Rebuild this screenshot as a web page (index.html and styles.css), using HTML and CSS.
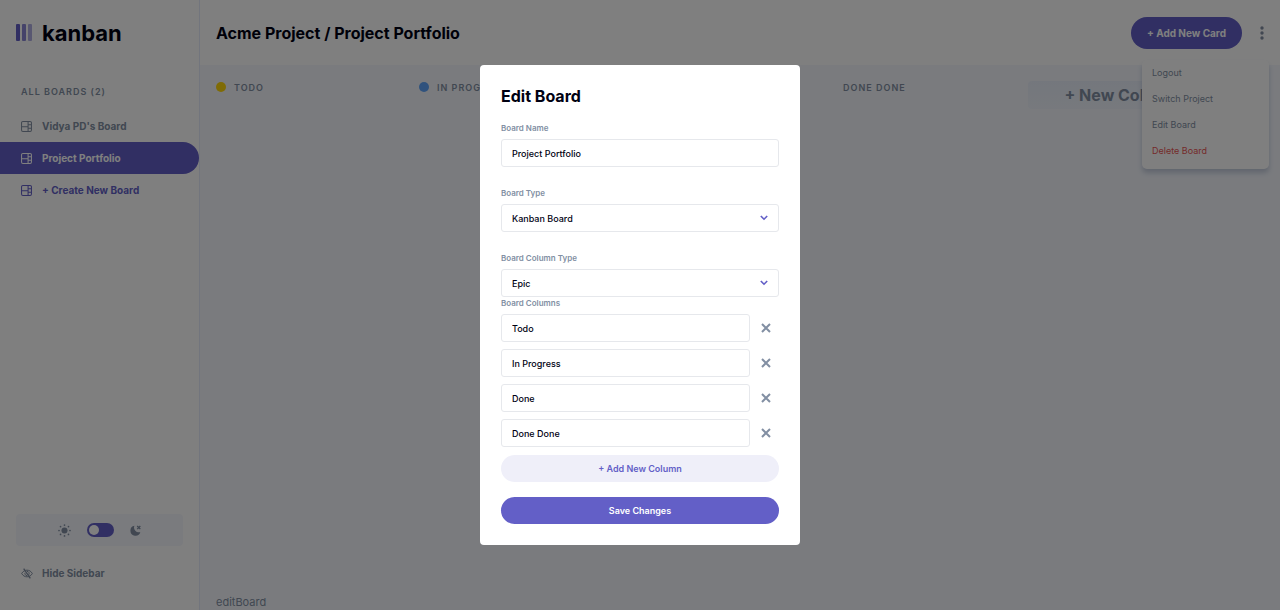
FILE: index.html
```html
<!DOCTYPE html>
<html lang="en">
<head>
  <meta charset="UTF-8" />
  <meta name="viewport" content="width=device-width, initial-scale=1.0"/>
  <title>Kanban</title>
  <link rel="stylesheet" href="styles.css">
</head>
<body>

  <!-- shared icons -->
  <svg class="sprite" aria-hidden="true">
    <symbol id="icon-board" viewBox="0 0 16 16">
      <path d="M2.8 .8h10.4a2 2 0 0 1 2 2v10.4a2 2 0 0 1-2 2H2.8a2 2 0 0 1-2-2V2.8a2 2 0 0 1 2-2zM10.3 .8v14.4M.8 8.500h9.500M10.300 5.400h4.900M10.300 10.600h4.900" fill="none" stroke="currentColor" stroke-width="1.500"/>
    </symbol>
    <symbol id="icon-cross" viewBox="0 0 15 15">
      <path d="M1.500 1.500l12 12M13.500 1.500l-12 12" fill="none" stroke="currentColor" stroke-width="3"/>
    </symbol>
    <symbol id="icon-chevron" viewBox="0 0 10 7">
      <path d="M1 1l4 4 4-4" fill="none" stroke="currentColor" stroke-width="2"/>
    </symbol>
  </svg>

  <div class="app">
    <aside class="sidebar">
      <div class="logo">
        <svg width="16" height="17" viewBox="0 0 16 17" aria-hidden="true">
          <rect width="4" height="17" rx="1"/>
          <rect x="6" width="4" height="17" rx="1" opacity=".75"/>
          <rect x="12" width="4" height="17" rx="1" opacity=".5"/>
        </svg>
        <span>kanban</span>
      </div>

      <h2 class="sidebar-title">ALL BOARDS (2)</h2>
      <nav class="board-list">
        <a href="#"><svg><use href="#icon-board"/></svg>Vidya PD's Board</a>
        <a href="#" class="active"><svg><use href="#icon-board"/></svg>Project Portfolio</a>
        <a href="#" class="create"><svg><use href="#icon-board"/></svg>+ Create New Board</a>
      </nav>

      <div class="theme-switch">
        <svg width="13" height="13" viewBox="0 0 18 18" aria-hidden="true">
          <circle cx="9" cy="9" r="4.200"/>
          <circle cx="9" cy="1.400" r="1.200"/><circle cx="9" cy="16.600" r="1.200"/>
          <circle cx="1.400" cy="9" r="1.200"/><circle cx="16.600" cy="9" r="1.200"/>
          <circle cx="3.500" cy="3.500" r="1.200"/><circle cx="14.500" cy="3.500" r="1.200"/>
          <circle cx="3.500" cy="14.500" r="1.200"/><circle cx="14.500" cy="14.500" r="1.200"/>
        </svg>
        <input type="checkbox" class="toggle" aria-label="Dark mode" />
        <svg width="11" height="11" viewBox="0 0 16 16" aria-hidden="true">
          <path d="M6.500 1.200A7.300 7.300 0 1 0 15 10.200 6.700 6.700 0 0 1 6.500 1.200z"/>
          <path d="M10.500 1.500l4.500 4.500M15 1.500L10.500 6" fill="none" stroke="currentColor" stroke-width="2"/>
        </svg>
      </div>

      <button class="hide-sidebar">
        <svg width="12" height="11" viewBox="0 0 18 16" aria-hidden="true">
          <g fill="none" stroke="currentColor" stroke-width="1.500">
            <path d="M1 8c1.800-3.200 4.600-5 8-5s6.200 1.800 8 5c-1.800 3.200-4.600 5-8 5S2.800 11.200 1 8z"/>
            <path d="M9 4.800A3.200 3.200 0 0 1 11.500 10M6 7a3.200 3.200 0 0 0 3 4.200"/>
            <path d="M4 .8l10 14.400" stroke-width="2"/>
          </g>
        </svg>
        Hide Sidebar
      </button>
    </aside>

    <div class="content">
      <header class="header">
        <h1>Acme Project / Project Portfolio</h1>
        <button class="add-card">+ Add New Card</button>
        <button class="menu-button" aria-label="Board menu">
          <svg width="4" height="14" viewBox="0 0 4 14">
            <circle cx="2" cy="2" r="1.700"/><circle cx="2" cy="7" r="1.700"/><circle cx="2" cy="12" r="1.700"/>
          </svg>
        </button>
        <div class="menu">
          <a href="#">Logout</a>
          <a href="#">Switch Project</a>
          <a href="#">Edit Board</a>
          <a href="#" class="danger">Delete Board</a>
        </div>
      </header>

      <main class="board">
        <section class="column"><h3><span class="dot yellow"></span>TODO</h3></section>
        <section class="column"><h3><span class="dot blue"></span>IN PROGRESS</h3></section>
        <section class="column"><h3><span class="dot"></span>DONE</h3></section>
        <section class="column"><h3><span class="dot"></span>DONE DONE</h3></section>
        <button class="new-column">+ New Column</button>
      </main>

      <p class="status">editBoard</p>
    </div>
  </div>

  <div class="overlay">
    <form class="modal" role="dialog" aria-labelledby="modal-title">
      <h2 id="modal-title">Edit Board</h2>

      <div class="field">
        <label for="board-name">Board Name</label>
        <input type="text" id="board-name" value="Project Portfolio" />
      </div>

      <div class="field">
        <label for="board-type">Board Type</label>
        <div class="select">
          <select id="board-type"><option>Kanban Board</option></select>
          <svg><use href="#icon-chevron"/></svg>
        </div>
      </div>

      <div class="field">
        <label for="column-type">Board Column Type</label>
        <div class="select">
          <select id="column-type"><option>Epic</option></select>
          <svg><use href="#icon-chevron"/></svg>
        </div>
      </div>

      <fieldset class="columns">
        <legend>Board Columns</legend>
        <div class="column-row">
          <input type="text" value="Todo" aria-label="Column 1" />
          <button type="button" aria-label="Remove Todo"><svg><use href="#icon-cross"/></svg></button>
        </div>
        <div class="column-row">
          <input type="text" value="In Progress" aria-label="Column 2" />
          <button type="button" aria-label="Remove In Progress"><svg><use href="#icon-cross"/></svg></button>
        </div>
        <div class="column-row">
          <input type="text" value="Done" aria-label="Column 3" />
          <button type="button" aria-label="Remove Done"><svg><use href="#icon-cross"/></svg></button>
        </div>
        <div class="column-row">
          <input type="text" value="Done Done" aria-label="Column 4" />
          <button type="button" aria-label="Remove Done Done"><svg><use href="#icon-cross"/></svg></button>
        </div>
      </fieldset>

      <button type="button" class="wide-button light">+ Add New Column</button>
      <button type="submit" class="wide-button">Save Changes</button>
    </form>
  </div>

</body>
</html>
```
FILE: styles.css
```css
* {
  box-sizing: border-box;
}

body {
  margin: 0;
  font-family: Inter, "Open Sans", sans-serif;
  font-size: 10px;
  color: #828fa3;
  background-color: #fff;
}

h1, h2, h3, p {
  margin: 0;
}

a {
  color: inherit;
  text-decoration: none;
}

button, input, select {
  font: inherit;
  color: inherit;
}

button {
  padding: 0;
  border: none;
  background: none;
  cursor: pointer;
}

svg {
  fill: currentColor;
  flex-shrink: 0;
}

.sprite {
  position: absolute;
  width: 0;
  height: 0;
}

.app {
  display: flex;
  height: 100vh;
}

/* Sidebar */

.sidebar {
  display: flex;
  flex-direction: column;
  width: 200px;
  flex-shrink: 0;
  padding-bottom: 26px;
  border-right: 1px solid #e4ebfa;
}

.logo {
  display: flex;
  align-items: center;
  gap: 10px;
  height: 65px;
  padding-left: 16px;
  color: #635fc7;
}

.logo span {
  font-size: 22px;
  font-weight: 700;
  color: #000112;
}

.sidebar-title {
  margin: 21px 0 12px 21px;
  font-size: 9px;
  line-height: 12px;
  font-weight: 600;
  letter-spacing: 1px;
}

.board-list a {
  display: flex;
  align-items: center;
  gap: 10px;
  height: 32px;
  padding-left: 21px;
  font-weight: 700;
}

.board-list svg {
  width: 11px;
  height: 11px;
}

.board-list .active {
  background-color: #635fc7;
  color: #fff;
  border-radius: 0 16px 16px 0;
}

.board-list .create {
  color: #635fc7;
}

.theme-switch {
  display: flex;
  justify-content: center;
  align-items: center;
  gap: 16px;
  height: 32px;
  margin: auto 16px 16px;
  background-color: #f4f7fd;
  border-radius: 4px;
}

.toggle {
  appearance: none;
  width: 27px;
  height: 14px;
  margin: 0;
  padding: 2px;
  background-color: #635fc7;
  border-radius: 7px;
}

.toggle::before {
  content: "";
  display: block;
  width: 10px;
  height: 10px;
  background-color: #fff;
  border-radius: 50%;
}

.hide-sidebar {
  display: flex;
  align-items: center;
  gap: 9px;
  height: 22px;
  padding-left: 21px;
  font-weight: 700;
}

/* Header */

.content {
  display: flex;
  flex-direction: column;
  flex: 1;
  min-width: 0;
  background-color: #f4f7fd;
}

.header {
  position: relative;
  display: flex;
  align-items: center;
  height: 65px;
  padding: 0 16px;
  background-color: #fff;
}

.header h1 {
  margin-right: auto;
  font-size: 16px;
  font-weight: 700;
  color: #000112;
}

.add-card {
  height: 32px;
  padding: 0 16px;
  font-weight: 700;
  color: #fff;
  background-color: #635fc7;
  border-radius: 16px;
}

.menu-button {
  display: flex;
  margin-left: 18px;
}

.menu {
  position: absolute;
  top: 60px;
  right: 11px;
  width: 127px;
  padding: 0 10px 5px;
  font-size: 9px;
  background-color: #fff;
  border-radius: 5px;
  box-shadow: 0 4px 5px rgba(54, 78, 126, 0.25);
}

.menu a {
  display: block;
  line-height: 26px;
}

.menu .danger {
  color: #ea5555;
}

/* Board */

.board {
  display: flex;
  align-items: flex-start;
  gap: 16px;
  flex: 1;
  padding: 16px;
  overflow: hidden;
}

.column {
  width: 187px;
  flex-shrink: 0;
}

.column h3 {
  display: flex;
  align-items: center;
  gap: 8px;
  height: 12px;
  font-size: 9px;
  font-weight: 600;
  letter-spacing: 1px;
}

.dot {
  width: 10px;
  height: 10px;
  border-radius: 50%;
}

.dot.yellow {
  background-color: #ffd60a;
}

.dot.blue {
  background-color: #60a5fa;
}

.new-column {
  width: 187px;
  height: 28px;
  flex-shrink: 0;
  font-size: 16px;
  font-weight: 700;
  background: linear-gradient(#e9effa, rgba(233, 239, 250, 0.5));
  border-radius: 4px;
}

.status {
  padding-left: 16px;
  font-size: 11px;
  line-height: 16px;
}

/* Modal */

.overlay {
  position: fixed;
  inset: 0;
  display: flex;
  justify-content: center;
  align-items: center;
  background-color: rgba(0, 0, 0, 0.5);
}

.modal {
  width: 320px;
  padding: 21px;
  font-size: 9px;
  font-weight: 600;
  background-color: #fff;
  border-radius: 4px;
}

.modal h2 {
  margin-bottom: 15px;
  font-size: 16px;
  line-height: 21px;
  color: #000112;
}

.field {
  margin-bottom: 20px;
}

.field label,
.columns legend {
  display: block;
  margin-bottom: 5px;
  padding: 0;
  font-size: 8px;
  line-height: 12px;
}

.modal input,
.modal select {
  display: block;
  width: 100%;
  height: 28px;
  padding: 0 10px;
  font-weight: 500;
  color: #000112;
  background-color: #fff;
  border: 1px solid #e6e8ec;
  border-radius: 3px;
  outline: none;
}

.modal select {
  appearance: none;
}

.select {
  position: relative;
}

.select svg {
  position: absolute;
  top: 11px;
  right: 11px;
  width: 8px;
  height: 6px;
  color: #635fc7;
  pointer-events: none;
}

.columns {
  display: flex;
  flex-direction: column;
  gap: 7px;
  margin: -20px 0 8px;
  padding: 0;
  border: none;
}

.column-row {
  display: flex;
  align-items: center;
  gap: 11px;
  padding-right: 8px;
}

.column-row button {
  display: flex;
}

.column-row svg {
  width: 10px;
  height: 10px;
}

.wide-button {
  display: block;
  width: 100%;
  height: 27px;
  font-weight: 600;
  color: #fff;
  background-color: #635fc7;
  border-radius: 14px;
}

.wide-button.light {
  margin-bottom: 15px;
  color: #635fc7;
  background-color: #efeff9;
}
```
